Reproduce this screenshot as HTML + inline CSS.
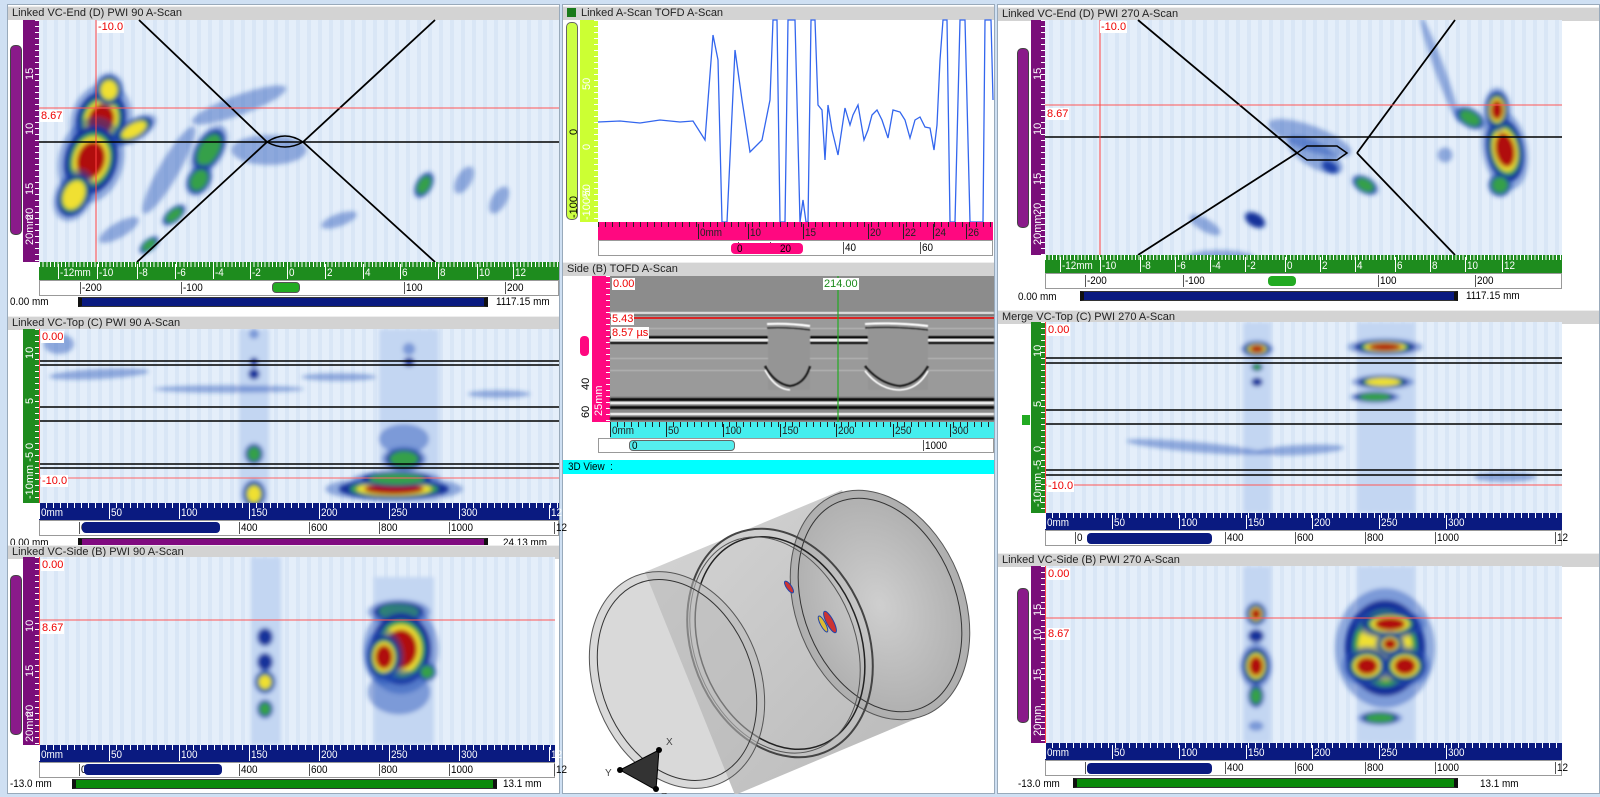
<!DOCTYPE html>
<html><head><meta charset="utf-8"><style>
*{margin:0;padding:0;box-sizing:border-box}
body{width:1600px;height:797px;background:#cfe0f3;position:relative;overflow:hidden;font-family:"Liberation Sans",sans-serif;font-size:11px;color:#000}
.a{position:absolute}
.tb{position:absolute;background:#d3d3d3;color:#222;font-size:11px;line-height:13px;padding-left:4px;white-space:nowrap;overflow:hidden;border-top:1px solid #eee}
.lbl{position:absolute;font-size:11px;line-height:12px;white-space:nowrap;transform:scaleX(.9);transform-origin:left}
.rd{position:absolute;background:#fff;color:#e00;font-size:11px;line-height:12px;padding:0 1px}
</style></head><body>
<div id="root"></div>
<script>
var H='';
function d(x,y,w,h,st,inner){H+='<div class="a" style="left:'+x+'px;top:'+y+'px;width:'+w+'px;height:'+h+'px;'+(st||'')+'">'+(inner||'')+'</div>';}
function t(x,y,s,st){H+='<div class="lbl" style="left:'+x+'px;top:'+y+'px;'+(st||'')+'">'+s+'</div>';}
function title(x,y,w,s,st){H+='<div class="tb" style="left:'+x+'px;top:'+y+'px;width:'+w+'px;height:14px;'+(st||'')+'">'+s+'</div>';}
function hr(x,y,w,h,bg,fg,labels,tick){
 d(x,y,w,h,'background:'+bg+';background-image:repeating-linear-gradient(90deg,'+fg+' 0 1px,transparent 1px '+(tick||7)+'px);background-size:100% 5px;background-repeat:no-repeat');
 labels.forEach(function(l){d(x+l[0],y+2,1,h-3,'background:'+fg);t(x+l[0]+2,y+h-13,l[1],'color:'+fg);});
}
function wax(x,y,w,h,labels){d(x,y,w,h,'background:#fff;border:1px solid #999');labels.forEach(function(l){d(x+l[0],y+2,1,h-4,'background:#555');t(x+l[0]+2,y+2,l[1]);});}
function vr(x,y,w,h,bg,labels){
 d(x,y,w,h,'background:'+bg+';background-image:repeating-linear-gradient(180deg,#fff 0 1px,transparent 1px 6px);background-size:4px 100%;background-repeat:no-repeat;background-position:right');
 labels.forEach(function(l){H+='<div class="lbl" style="left:'+(x+1)+'px;top:'+(y+l[0])+'px;color:#fff;transform:rotate(-90deg);transform-origin:left top">'+l[1]+'</div>';});
}
function slider(x,y,w,col){d(x,y,w,10,'background:'+col+';border:1px solid #333;border-left:4px solid #111;border-right:4px solid #111');}
function blob(cx,cy,rx,ry,lv,rot){
 var c=['#2452b8','#17309a','#36a048','#f0e030','#b00c0c'],f=[1.25,1,0.8,0.68,0.54],s='',r=rot||0;
 for(var i=0;i<=lv;i++){s+='<ellipse cx="'+cx+'" cy="'+cy+'" rx="'+(rx*f[i])+'" ry="'+(ry*f[i])+'" fill="'+c[i]+'" '+(i==0?'opacity=".45"':'')+' transform="rotate('+r+' '+cx+' '+cy+')"/>';}
 return s;
}
function heat(x,y,w,h,inner){
 var id=''+x+'_'+y;
 var bg='<defs><filter id="bl'+id+'"><feGaussianBlur stdDeviation="2.2"/></filter><pattern id="pt'+id+'" width="11" height="'+h+'" patternUnits="userSpaceOnUse"><rect width="11" height="'+h+'" fill="#e4eefa"/><rect x="4" width="4" height="'+h+'" fill="#d9e6f6"/></pattern></defs><rect width="'+w+'" height="'+h+'" fill="url(#pt'+id+')"/>';
 H+='<svg class="a" style="left:'+x+'px;top:'+y+'px" width="'+w+'" height="'+h+'" viewBox="0 0 '+w+' '+h+'">'+bg+'<g filter="url(#bl'+id+')">'+inner+'</g></svg>';
}
function svg(x,y,w,h,inner){H+='<svg class="a" style="left:'+x+'px;top:'+y+'px;overflow:visible" width="'+w+'" height="'+h+'">'+inner+'</svg>';}
function rdl(x,y,s,c){H+='<div class="rd" style="left:'+x+'px;top:'+y+'px;color:'+(c||'#e00')+'">'+s+'</div>';}

d(7,4,553,790,'background:#fff;border:1px solid #9ab');
d(562,4,433,790,'background:#fff;border:1px solid #9ab');
d(997,4,603,790,'background:#fff;border:1px solid #9ab');

var gx=[[19,'-12mm'],[58,'-10'],[98,'-8'],[136,'-6'],[174,'-4'],[211,'-2'],[248,'0'],[286,'2'],[324,'4'],[361,'6'],[399,'8'],[438,'10'],[474,'12']];
// LEFT 1
title(8,6,551,'Linked VC-End (D) PWI 90 A-Scan');
d(10,45,12,190,'background:#8a1a8a;border-radius:5px;border:1px solid #444');
vr(23,20,16,242,'#7a0e7a',[[60,'15'],[115,'10'],[175,'15'],[200,'20'],[225,'20mm']]);
heat(39,20,520,242,
 blob(62,100,24,30,4,20)+blob(52,140,26,35,4,15)+blob(35,175,15,22,3,25)+blob(95,110,20,9,3,-30)+blob(70,70,12,14,3)+
 blob(170,130,12,22,2,30)+blob(160,160,10,14,2,30)+blob(135,195,12,6,2,-40)+blob(110,225,10,5,2,-40)+
 blob(230,130,30,12,0,0)+blob(385,165,7,12,2,30)+blob(425,160,6,12,0,30)+blob(460,180,6,12,0,30)+blob(300,200,15,5,0,-20)+blob(200,85,40,8,0,-20)+blob(80,210,18,6,0,-30)+blob(130,150,8,40,0,30));
svg(39,20,520,242,'<path d="M100 0 L228 122 M264 122 L396 0 M98 242 L228 122 M264 122 L396 242" stroke="#000" stroke-width="1.8" fill="none"/><path d="M228 122 Q246 110 264 122 Q246 132 228 122" stroke="#000" stroke-width="1.5" fill="none"/><line x1="0" y1="122" x2="520" y2="122" stroke="#000" stroke-width="1.5"/><line x1="0" y1="88" x2="520" y2="88" stroke="#f55" stroke-width="1"/><line x1="57" y1="0" x2="57" y2="242" stroke="#f44" stroke-width="1"/>');
rdl(97,21,'-10.0');rdl(40,110,'8.67');
hr(39,262,520,18,'#1e8c1e','#fff',gx,3.7);
wax(39,280,520,16,[[41,'-200'],[142,'-100'],[365,'100'],[466,'200']]);
d(272,282,28,11,'background:#2a2;border-radius:4px;border:1px solid #555');
t(10,296,'0.00 mm');slider(78,297,410,'#0a1a80');t(496,296,'1117.15 mm');

var nx=[[0,'0mm'],[70,'50'],[140,'100'],[210,'150'],[280,'200'],[350,'250'],[420,'300'],[510,'12']];
var wx=[[40,'0'],[200,'400'],[270,'600'],[340,'800'],[410,'1000'],[515,'12']];
// LEFT 2
title(8,316,551,'Linked VC-Top (C) PWI 90 A-Scan');
vr(23,329,16,174,'#1e8c1e',[[30,'10'],[75,'5'],[120,'0'],[170,'-10mm -5']]);
heat(39,329,520,174,
 '<rect x="200" y="0" width="30" height="174" fill="#c3d6f2"/><rect x="340" y="0" width="60" height="174" fill="#c3d6f2"/>'+
 blob(215,5,4,4,0)+blob(215,33,4,4,1)+blob(215,45,5,5,1)+blob(215,125,8,9,2)+blob(215,165,10,12,3)+
 blob(370,20,5,5,0)+blob(370,33,5,4,1)+blob(365,110,20,12,0)+blob(365,130,18,10,2)+blob(355,160,55,10,4)+blob(358,150,35,7,2)+
 blob(60,45,40,4,0,-3)+blob(190,60,60,3,0)+blob(300,48,30,3,0)+blob(460,65,25,3,0)+blob(20,15,12,8,0));
svg(39,329,520,174,'<g stroke="#000" stroke-width="1.5"><line x1="0" y1="32" x2="520" y2="32"/><line x1="0" y1="36" x2="520" y2="36"/><line x1="0" y1="78" x2="520" y2="78"/><line x1="0" y1="92" x2="520" y2="92"/><line x1="0" y1="135" x2="520" y2="135"/><line x1="0" y1="139" x2="520" y2="139"/></g><line x1="0" y1="149" x2="520" y2="149" stroke="#f66"/><line x1="0.5" y1="0" x2="0.5" y2="174" stroke="#f44"/>');
rdl(41,331,'0.00');rdl(41,475,'-10.0');
hr(39,503,520,17,'#0a1a80','#fff',nx,7);
wax(39,520,520,16,wx);d(82,522,138,11,'background:#0a1a80;border-radius:4px');
t(10,537,'0.00 mm');slider(78,538,410,'#800a80');t(503,537,'24.13 mm');

// LEFT 3
title(8,545,551,'Linked VC-Side (B) PWI 90 A-Scan');
d(10,575,12,160,'background:#8a1a8a;border-radius:5px;border:1px solid #444');
vr(23,557,16,188,'#7a0e7a',[[75,'10'],[120,'15'],[160,'20'],[185,'20mm']]);
heat(39,557,516,188,
 '<rect x="212" y="0" width="30" height="188" fill="#c3d6f2"/><rect x="335" y="20" width="60" height="168" fill="#c3d6f2"/>'+
 blob(226,80,7,8,1)+blob(226,105,7,8,1)+blob(226,125,9,10,3)+blob(226,152,7,8,2)+
 blob(360,55,25,10,2)+blob(362,92,30,36,4)+blob(345,100,16,22,4)+blob(360,135,25,18,0)+blob(388,115,8,8,2));
svg(39,557,516,188,'<line x1="0" y1="63" x2="516" y2="63" stroke="#f55"/><line x1="0.5" y1="0" x2="0.5" y2="188" stroke="#f44"/>');
rdl(41,559,'0.00');rdl(41,622,'8.67');
hr(39,745,516,17,'#0a1a80','#fff',nx,7);
wax(39,762,516,16,wx);d(84,764,138,11,'background:#0a1a80;border-radius:4px');
t(10,778,'-13.0 mm');slider(72,779,425,'#0a8a0a');t(503,778,'13.1 mm');

// MIDDLE A-SCAN
title(563,6,431,'<span style="display:inline-block;width:9px;height:9px;background:#1a7a1a;margin-right:5px;vertical-align:-1px"></span>Linked A-Scan TOFD A-Scan');
d(566,22,12,198,'background:#ccff44;border:1px solid #666;border-radius:5px');
vr(580,20,18,202,'#ccff33',[[70,'50'],[130,'0'],[180,'-50'],[200,'-100%']]);
H+='<div class="lbl" style="left:568px;top:135px;transform:rotate(-90deg);transform-origin:left top">0</div><div class="lbl" style="left:568px;top:218px;transform:rotate(-90deg);transform-origin:left top">-100</div>';
svg(598,20,395,202,'<polyline fill="none" stroke="#3366ee" stroke-width="1.3" transform="translate(-598,-20)" points="598,122 620,121 640,123 660,120 680,122 693,121 705,140 713,35 718,60 722,222 727,222 735,50 742,100 750,152 762,140 770,100 773,20 777,20 780,222 785,222 788,20 795,20 800,222 803,200 806,222 808,222 811,20 815,20 818,105 822,110 825,160 828,105 832,130 838,155 845,108 850,125 853,115 858,105 864,140 868,130 872,115 877,110 882,120 888,138 893,110 900,112 905,120 910,138 915,120 920,117 925,127 930,128 934,150 937,125 940,60 943,20 947,20 950,222 955,222 960,20 965,20 970,222 983,222 985,20 991,20 993,100"/>');
hr(598,222,395,18,'#ff0880','#222',[[100,'0mm'],[150,'10'],[205,'15'],[270,'20'],[305,'22'],[335,'24'],[368,'26']],7);
wax(598,240,395,16,[[140,'0'],[172,'20'],[245,'40'],[322,'60']]);d(731,243,72,11,'background:#ff0880;border-radius:4px');
t(737,243,'0');t(780,243,'20');

// SIDE B
title(563,262,431,'Side (B) TOFD A-Scan');
d(580,336,9,20,'background:#ff0880;border-radius:4px');
t(580,390,'40','transform:rotate(-90deg);transform-origin:left top');t(580,418,'60','transform:rotate(-90deg);transform-origin:left top');
vr(592,276,18,146,'#ff0880',[[140,'25mm']]);
svg(610,276,384,146,'<defs><filter id="tb"><feGaussianBlur stdDeviation=".6"/></filter></defs><rect width="384" height="146" fill="#8c8c8c"/><rect y="40" width="384" height="80" fill="#9a9a9a"/><g filter="url(#tb)"><rect y="36" width="384" height="2" fill="#eee"/><rect y="38" width="384" height="1" fill="#333"/><rect y="52" width="384" height="1" fill="#bbb"/><rect y="60" width="384" height="3" fill="#111"/><rect y="63" width="384" height="2" fill="#fff"/><rect y="66" width="384" height="2" fill="#111"/><rect y="82" width="384" height="1" fill="#bbb"/><rect y="94" width="384" height="1" fill="#bbb"/><rect y="122" width="384" height="3" fill="#111"/><rect y="126" width="384" height="2" fill="#fff"/><rect y="130" width="384" height="3" fill="#111"/><rect y="137" width="384" height="2" fill="#fff"/><rect y="141" width="384" height="3" fill="#111"/><rect x="158" y="46" width="42" height="68" fill="#959595"/><rect x="258" y="46" width="60" height="68" fill="#959595"/><path d="M157 48 Q178 47 200 50" stroke="#fff" stroke-width="2" fill="none"/><path d="M157 52 Q178 51 200 54" stroke="#222" stroke-width="1.5" fill="none"/><path d="M155 90 Q165 108 180 110 Q195 108 200 90" stroke="#222" stroke-width="2.5" fill="none"/><path d="M155 94 Q165 113 180 114" stroke="#fff" stroke-width="1.5" fill="none"/><path d="M255 48 Q285 46 318 50" stroke="#fff" stroke-width="2" fill="none"/><path d="M255 52 Q285 50 318 54" stroke="#222" stroke-width="1.5" fill="none"/><path d="M255 90 Q270 108 290 110 Q308 108 318 90" stroke="#222" stroke-width="2.5" fill="none"/><path d="M255 95 Q270 114 290 114 Q308 113 318 95" stroke="#fff" stroke-width="1.5" fill="none"/></g><line x1="0" y1="42" x2="384" y2="42" stroke="#e00" stroke-width="1.5"/><line x1="228" y1="0" x2="228" y2="146" stroke="#2a2" stroke-width="1.2"/>');
rdl(612,278,'0.00');rdl(823,278,'214.00','#1a8a1a');rdl(611,313,'5.43');rdl(611,327,'8.57 µs');
hr(610,422,384,16,'#44eeee','#222',[[0,'0mm'],[56,'50'],[113,'100'],[170,'150'],[226,'200'],[283,'250'],[340,'300']],7);
wax(598,438,396,15,[[325,'1000']]);d(629,440,106,11,'background:#55eeee;border:1px solid #666;border-radius:4px');t(632,440,'0');

// 3D VIEW
d(563,460,431,14,'background:#00ffff');t(568,461,'3D View&nbsp; :');
svg(563,474,431,320,'<defs><linearGradient id="cg" x1="0" y1="0" x2="1" y2="1"><stop offset="0" stop-color="#d6d6d6"/><stop offset="1" stop-color="#b8b8b8"/></linearGradient><radialGradient id="ig" cx=".5" cy=".5" r=".6"><stop offset="0" stop-color="#cfcfcf"/><stop offset="1" stop-color="#a8a8a8"/></radialGradient><clipPath id="cc"><rect x="563" y="474" width="431" height="320"/></clipPath></defs><g transform="translate(-563,-474)" clip-path="url(#cc)"><polygon points="645,572 842,490 932,712 735,795" fill="url(#cg)"/><ellipse cx="880" cy="605" rx="84" ry="119" transform="rotate(-22 880 605)" fill="url(#ig)" stroke="#555" stroke-width="1"/><ellipse cx="880" cy="605" rx="76" ry="111" transform="rotate(-22 880 605)" fill="none" stroke="#333" stroke-width="1"/><ellipse cx="780" cy="643" rx="88" ry="118" transform="rotate(-22 780 643)" fill="none" stroke="#444" stroke-width="2"/><ellipse cx="780" cy="643" rx="80" ry="110" transform="rotate(-22 780 643)" fill="none" stroke="#222" stroke-width="1.5"/><ellipse cx="775" cy="645" rx="80" ry="112" transform="rotate(-22 775 645)" fill="none" stroke="#555" stroke-width="1"/><ellipse cx="677" cy="680" rx="83" ry="112" transform="rotate(-22 677 680)" fill="rgba(185,185,185,.55)" stroke="#555" stroke-width="1"/><ellipse cx="677" cy="680" rx="75" ry="104" transform="rotate(-22 677 680)" fill="none" stroke="#333" stroke-width="1"/><ellipse cx="789" cy="587" rx="2.5" ry="7" transform="rotate(-35 789 587)" fill="#c33" stroke="#24a"/><ellipse cx="830" cy="622" rx="3.5" ry="12" transform="rotate(-28 830 622)" fill="#c33" stroke="#24a"/><ellipse cx="823" cy="624" rx="2.5" ry="9" transform="rotate(-28 823 624)" fill="#db3" stroke="#24a"/><path d="M620 770 L659 750 L656 790 Z" fill="#333" stroke="#000"/><circle cx="620" cy="770" r="3"/><circle cx="659" cy="750" r="3"/><circle cx="656" cy="789" r="3"/><text x="605" y="776" font-size="10" fill="#444">Y</text><text x="666" y="745" font-size="10" fill="#444">X</text><text x="661" y="800" font-size="10" fill="#444">Z</text></g>');

// RIGHT 1
title(998,7,601,'Linked VC-End (D) PWI 270 A-Scan');
d(1017,48,12,180,'background:#8a1a8a;border-radius:5px;border:1px solid #444');
vr(1031,20,14,235,'#7a0e7a',[[60,'15'],[115,'10'],[165,'15'],[195,'20'],[225,'20mm']]);
heat(1045,20,517,235,
 blob(460,130,18,32,4,-10)+blob(452,90,11,18,4,0)+blob(425,98,14,8,2,30)+blob(455,165,10,10,2)+blob(400,135,6,6,0)+
 blob(320,165,12,7,2,30)+blob(285,147,8,5,1,30)+blob(270,135,25,10,0,30)+blob(210,200,10,6,1,30)+blob(160,205,14,5,0,30)+
 blob(265,118,35,10,0,20)+blob(395,50,4,45,0,-20)+blob(175,240,30,8,0,0));
svg(1045,20,517,235,'<path d="M93 0 L252 133 M312 133 L410 0 M93 235 L252 133 M312 133 L410 235" stroke="#000" stroke-width="1.8" fill="none"/><path d="M252 133 L262 126 L292 126 L302 133 L292 140 L262 140 Z" stroke="#000" stroke-width="1.5" fill="none"/><line x1="0" y1="117" x2="517" y2="117" stroke="#000" stroke-width="1.5"/><line x1="0" y1="85" x2="517" y2="85" stroke="#f55"/><line x1="55" y1="0" x2="55" y2="235" stroke="#f44"/>');
rdl(1100,21,'-10.0');rdl(1046,108,'8.67');
hr(1045,255,517,18,'#1e8c1e','#fff',[[15,'-12mm'],[55,'-10'],[95,'-8'],[130,'-6'],[165,'-4'],[200,'-2'],[240,'0'],[275,'2'],[310,'4'],[350,'6'],[385,'8'],[420,'10'],[457,'12']],3.6);
wax(1045,273,517,16,[[40,'-200'],[138,'-100'],[333,'100'],[430,'200']]);d(1268,276,28,10,'background:#2a2;border-radius:4px');
t(1018,291,'0.00 mm');slider(1080,291,378,'#0a1a80');t(1466,290,'1117.15 mm');

// RIGHT 2
title(998,310,601,'Merge VC-Top (C) PWI 270 A-Scan');
vr(1031,322,14,191,'#1e8c1e',[[35,'10'],[85,'5'],[130,'0'],[185,'-10mm -5']]);
d(1022,415,8,10,'background:#2a2');
heat(1045,322,517,191,
 '<rect x="198" y="0" width="28" height="191" fill="#c3d6f2"/><rect x="312" y="0" width="58" height="191" fill="#c3d6f2"/>'+
 blob(212,27,13,7,4)+blob(212,45,5,4,2)+blob(212,60,5,4,1)+blob(340,25,30,7,4)+blob(338,60,25,6,3)+blob(330,75,20,5,2)+
 blob(150,125,55,4,0,5)+blob(255,128,35,4,0,-3)+blob(460,155,25,4,0));
svg(1045,322,517,191,'<g stroke="#000" stroke-width="1.5"><line x1="0" y1="36" x2="517" y2="36"/><line x1="0" y1="41" x2="517" y2="41"/><line x1="0" y1="88" x2="517" y2="88"/><line x1="0" y1="102" x2="517" y2="102"/><line x1="0" y1="148" x2="517" y2="148"/><line x1="0" y1="153" x2="517" y2="153"/></g><line x1="0" y1="163" x2="517" y2="163" stroke="#f55"/><line x1="0.5" y1="0" x2="0.5" y2="191" stroke="#f44"/>');
rdl(1047,324,'0.00');rdl(1047,480,'-10.0');
hr(1045,513,517,17,'#0a1a80','#fff',[[0,'0mm'],[67,'50'],[134,'100'],[201,'150'],[267,'200'],[334,'250'],[401,'300']],7);
wax(1045,530,517,16,[[30,'0'],[180,'400'],[250,'600'],[320,'800'],[390,'1000'],[510,'12']]);d(1087,533,125,11,'background:#0a1a80;border-radius:4px');

// RIGHT 3
title(998,553,601,'Linked VC-Side (B) PWI 270 A-Scan');
d(1017,588,12,135,'background:#8a1a8a;border-radius:5px;border:1px solid #444');
vr(1031,566,14,177,'#7a0e7a',[[50,'15'],[75,'10'],[115,'15'],[170,'20mm']]);
heat(1045,566,517,177,
 '<rect x="198" y="0" width="28" height="177" fill="#c3d6f2"/><rect x="312" y="0" width="58" height="177" fill="#c3d6f2"/>'+
 blob(211,48,9,10,4)+blob(211,70,7,6,1)+blob(211,100,13,18,4)+blob(211,130,7,10,2)+blob(211,160,6,4,0)+
 blob(340,82,40,48,3)+blob(345,58,28,12,4)+blob(322,100,20,16,4)+blob(360,100,20,16,4)+blob(345,78,12,10,4)+blob(335,152,18,6,2));
svg(1045,566,517,177,'<line x1="0" y1="52" x2="517" y2="52" stroke="#f55"/><line x1="0.5" y1="0" x2="0.5" y2="177" stroke="#f44"/>');
rdl(1047,568,'0.00');rdl(1047,628,'8.67');
hr(1045,743,517,17,'#0a1a80','#fff',[[0,'0mm'],[67,'50'],[134,'100'],[201,'150'],[267,'200'],[334,'250'],[401,'300']],7);
wax(1045,760,517,16,[[40,'0'],[180,'400'],[250,'600'],[320,'800'],[390,'1000'],[510,'12']]);d(1087,763,125,11,'background:#0a1a80;border-radius:4px');
t(1018,778,'-13.0 mm');slider(1073,778,385,'#0a8a0a');t(1480,778,'13.1 mm');

document.getElementById('root').innerHTML=H;
</script>
</body></html>
